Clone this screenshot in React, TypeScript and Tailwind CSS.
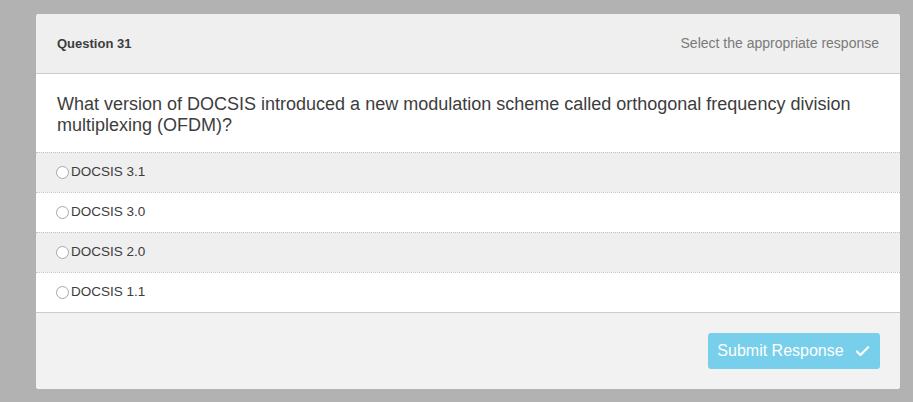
import { Check } from 'lucide-react';

const options = ['DOCSIS 3.1', 'DOCSIS 3.0', 'DOCSIS 2.0', 'DOCSIS 1.1'];

export default function App() {
  return (
    <div
      className="h-[402px] w-[913px] bg-[#b2b2b2] pl-[36px] pr-[13px] pt-[14px]"
      style={{ fontFamily: '"Liberation Sans", Arial, sans-serif' }}
    >
      <div className="flex h-[375px] flex-col overflow-hidden rounded-[3px] bg-white">
        <div className="flex h-[60px] items-center justify-between border-b border-[#cccccc] bg-[#efefef] px-[21px]">
          <span className="text-[13px] font-bold text-[#3d3d3d]">Question 31</span>
          <span className="text-[14px] text-[#7a7a7a]">Select the appropriate response</span>
        </div>
        <div className="px-[21px] pb-[16px] pt-[20px] text-[18px] leading-[21px] text-[#3d3d3d]">
          What version of DOCSIS introduced a new modulation scheme called orthogonal frequency division
          multiplexing (OFDM)?
        </div>
        {options.map((o, i) => (
          <label
            key={o}
            className={`flex h-[40px] items-center border-t border-dotted border-[#c4c4c4] pl-[20px] text-[13.5px] text-[#3d3d3d] ${
              i % 2 === 0 ? 'bg-[#efefef]' : 'bg-white'
            }`}
          >
            <span className="mr-[2px] h-[13px] w-[13px] rounded-full border border-[#a8a8a8] bg-white" />
            {o}
          </label>
        ))}
        <div className="flex flex-1 items-center justify-end border-t border-[#cccccc] bg-[#f2f2f2] pr-[20px]">
          <button className="flex h-[36px] w-[172px] items-center justify-center gap-[10px] rounded-[3px] bg-[#77cfeb] text-[16px] text-white">
            Submit Response
            <Check size={17} strokeWidth={3} />
          </button>
        </div>
      </div>
    </div>
  );
}
